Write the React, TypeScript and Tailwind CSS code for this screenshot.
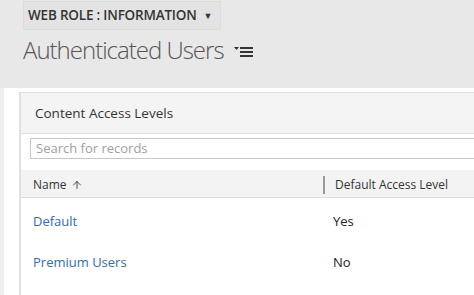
import { ArrowUp } from 'lucide-react'

const font = { fontFamily: '"Open Sans", "Noto Sans", sans-serif' }

function ViewIcon() {
  return (
    <svg width="20" height="14" viewBox="0 0 20 14" className="text-[#333]">
      <polygon points="0,2 5,2 2.5,5" fill="currentColor" />
      <rect x="6" y="2" width="13" height="2" fill="currentColor" />
      <rect x="6" y="6" width="13" height="2" fill="currentColor" />
      <rect x="6" y="10" width="13" height="2" fill="currentColor" />
    </svg>
  )
}

const rows = [
  { name: 'Default', level: 'Yes' },
  { name: 'Premium Users', level: 'No' },
]

export default function App() {
  return (
    <div className="w-[474px] h-[295px] overflow-hidden bg-white flex flex-col" style={font}>
      {/* page header */}
      <div className="h-[88px] bg-[#e8e8e8] pl-[23px] pt-[1px] shrink-0">
        <div className="inline-flex items-center h-[29px] pl-[4px] pr-[8px] bg-[#e3e3e3] border border-[#dbdbdb] text-[13.5px] font-semibold text-[#333] whitespace-nowrap tracking-[-0.2px]">
          WEB ROLE : INFORMATION
          <span className="ml-[7px] text-[9px]">▼</span>
        </div>
        <div className="flex items-center mt-[1px] h-[38px]">
          <span className="text-[24px] font-light text-[#555] tracking-[-1px] whitespace-nowrap">Authenticated Users</span>
          <span className="ml-[10px] mt-[3px]"><ViewIcon /></span>
        </div>
      </div>

      <div className="flex flex-1 pt-[4px]">
        <div className="w-[4px] bg-[#efefef] -mt-[4px]" />
        <div className="w-[15px]" />
        {/* panel */}
        <div className="flex-1 border-l-2 border-t border-[#e0e0e0]">
          <div className="h-[41px] bg-[#f4f4f4] border-b border-[#dedede] flex items-center pl-[14px] text-[13.5px] text-[#333] font-medium">
            Content Access Levels
          </div>
          <div className="pl-[9px] pt-[4px] pb-[11px]">
            <div className="h-[21px] border border-[#c8c8c8] border-r-0 flex items-center pl-[5px] text-[13px] text-[#a0a0a0]">
              Search for records
            </div>
          </div>
          <div className="h-[28px] bg-[#f3f3f3] border-b border-[#dcdcdc] flex items-center text-[12px] text-[#333] pt-[2px]">
            <div className="w-[302px] pl-[12px] flex items-center gap-[4px]">
              Name <ArrowUp size={12} strokeWidth={1.75} />
            </div>
            <div className="w-[2px] h-[18px] bg-[#9a9a9a]" />
            <div className="pl-[10px]">Default Access Level</div>
          </div>
          <div className="pt-[3px]">
            {rows.map((r) => (
              <div key={r.name} className="h-[41px] flex items-center text-[13px]">
                <div className="w-[304px] pl-[12px] text-[#2f6cb3]">{r.name}</div>
                <div className="pl-[8px] text-[#222]">{r.level}</div>
              </div>
            ))}
          </div>
        </div>
      </div>
    </div>
  )
}
